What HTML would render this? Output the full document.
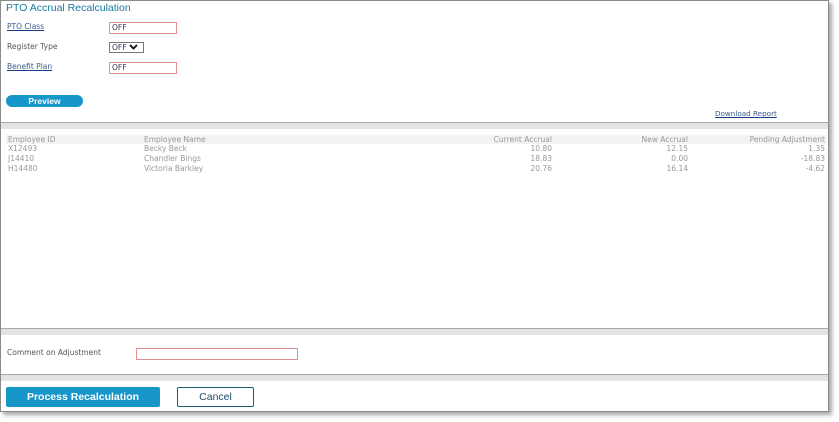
<!DOCTYPE html><html><head><style>
body{margin:0;width:839px;height:422px;background:#fff;font-family:"DejaVu Sans","Liberation Sans",sans-serif;position:relative;overflow:hidden}
.f{position:absolute;left:0;top:0;width:827px;height:410px;border:1px solid #8a8a8a;box-shadow:3px 3px 4px rgba(0,0,0,.35);background:#fff}
.a{position:absolute;white-space:nowrap}
.lbl{font-size:7.5px;color:#555}
.lnk{font-size:7.5px;color:#3a5a8a;text-decoration:underline;text-decoration-color:#1a3a8a}
.inp{position:absolute;border:1px solid #e09090;height:10px;font-size:7.5px;color:#335;line-height:10px;padding-left:2px;box-sizing:content-box}
.band{position:absolute;left:1px;width:827px;background:#e3e3e3;border-top:1px solid #aaa}
.t{font-size:7.5px;color:#999}
.r{text-align:right}
</style></head><body>
<div class="f"></div>
<div class="a" style="left:6px;top:2px;font-size:10.5px;color:#1a7aa0;font-family:'Liberation Sans',sans-serif">PTO Accrual Recalculation</div>
<div class="a lnk" style="left:7px;top:22px">PTO Class</div>
<div class="inp" style="left:109px;top:22px;width:64px">OFF</div>
<div class="a lbl" style="left:7px;top:42px">Register Type</div>
<div class="a" style="left:109px;top:42px;width:31px;height:9px;border:1px solid #777;font-size:7.5px;color:#335;line-height:9px;padding-left:2px">OFF <svg width="9" height="6" viewBox="0 0 9 6" style="vertical-align:0"><path d="M1 1L4.5 4.5L8 1" stroke="#222" stroke-width="2" fill="none"/></svg></div>
<div class="a lnk" style="left:7px;top:62px">Benefit Plan</div>
<div class="inp" style="left:109px;top:62px;width:64px">OFF</div>
<div class="a" style="left:6px;top:95px;width:77px;height:12px;border-radius:6px;background:#1796c9;color:#fff;font-size:8.5px;font-weight:bold;text-align:center;line-height:13px;font-family:'Liberation Sans',sans-serif">Preview</div>
<div class="a lnk" style="left:715px;top:109px;font-size:7.2px">Download Report</div>
<div class="band" style="top:122px;height:6px"></div>
<div class="a" style="left:6px;top:135px;width:820px;height:9px;background:#f3f3f3"></div>
<div class="a t" style="left:8px;top:135px">Employee ID</div>
<div class="a t" style="left:144px;top:135px">Employee Name</div>
<div class="a t r" style="left:452px;width:100px;top:135px">Current Accrual</div>
<div class="a t r" style="left:588px;width:100px;top:135px">New Accrual</div>
<div class="a t r" style="left:685px;width:140px;top:135px">Pending Adjustment</div>
<div class="a t" style="left:8px;top:144px;line-height:10px">X12493<br>J14410<br>H14480</div>
<div class="a t" style="left:144px;top:144px;line-height:10px">Becky Beck<br>Chandler Bings<br>Victoria Barkley</div>
<div class="a t r" style="left:452px;width:100px;top:144px;line-height:10px">10.80<br>18.83<br>20.76</div>
<div class="a t r" style="left:588px;width:100px;top:144px;line-height:10px">12.15<br>0.00<br>16.14</div>
<div class="a t r" style="left:685px;width:140px;top:144px;line-height:10px">1.35<br>-18.83<br>-4.62</div>
<div class="band" style="top:328px;height:6px"></div>
<div class="a lbl" style="left:7px;top:348px">Comment on Adjustment</div>
<div class="inp" style="left:136px;top:348px;width:158px"></div>
<div class="band" style="top:374px;height:6px"></div>
<div class="a" style="left:6px;top:387px;width:154px;height:20px;border-radius:2px;background:#1796c9;color:#fff;font-size:10.5px;font-weight:bold;text-align:center;line-height:20px;font-family:'Liberation Sans',sans-serif">Process Recalculation</div>
<div class="a" style="left:177px;top:387px;width:75px;height:18px;border:1px solid #1a5a7a;border-radius:2px;color:#1a4a6a;font-size:10.5px;text-align:center;line-height:18px;font-family:'Liberation Sans',sans-serif">Cancel</div>
</body></html>
